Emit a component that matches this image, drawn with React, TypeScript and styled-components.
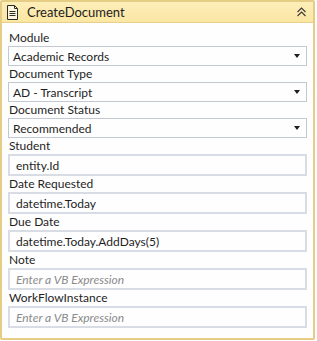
import React from "react";
import styled, { createGlobalStyle } from "styled-components";

const Global = createGlobalStyle`
  html, body { margin: 0; padding: 0; background: #ffffff; }
  body { font-family: "Lato", "Noto Sans", sans-serif; }
`;

const Panel = styled.div`
  width: 315px;
  height: 340px;
  box-sizing: border-box;
  border: 2px solid #e6cd85;
  border-radius: 2px;
  background: #fefefe;
  display: flex;
  flex-direction: column;
`;

const Header = styled.div`
  height: 21px;
  box-sizing: border-box;
  background: linear-gradient(#fdeeb9, #fbe6a3);
  border-bottom: 1px solid #e8d08c;
  display: flex;
  align-items: center;
  padding: 0 6px 0 4px;
  gap: 8px;
`;

const Title = styled.span`
  flex: 1;
  font-size: 13px;
  color: #1e1e1e;
`;

const Body = styled.div`
  display: flex;
  flex-direction: column;
  padding: 7px 6px 0 6px;
`;

const Field = styled.div`
  display: flex;
  flex-direction: column;
`;

const Label = styled.div`
  font-size: 12px;
  line-height: 16px;
  color: #1e1e1e;
  padding-left: 1px;
`;

const Select = styled.div`
  height: 20px;
  box-sizing: border-box;
  border: 1px solid #c3c9d2;
  background: #fefefe;
  display: flex;
  align-items: center;
  padding: 0 6px 0 4px;
  font-size: 12px;
  color: #1e1e1e;
  justify-content: space-between;
`;

const Arrow = styled.span`
  width: 0;
  height: 0;
  border-left: 3.5px solid transparent;
  border-right: 3.5px solid transparent;
  border-top: 4px solid #1e1e1e;
`;

const TextBox = styled.div<{ $placeholder?: boolean }>`
  height: 22px;
  box-sizing: border-box;
  border: 2px solid #d8dde5;
  background: #fefefe;
  display: flex;
  align-items: center;
  padding: 0 6px;
  font-size: 12px;
  color: ${(p) => (p.$placeholder ? "#8a8a8a" : "#1e1e1e")};
  font-style: ${(p) => (p.$placeholder ? "italic" : "normal")};
`;

const DocIcon = () => (
  <svg width="13" height="15" viewBox="0 0 13 15">
    <path d="M1.5 0.5 H8.5 L11.5 3.5 V14.5 H1.5 Z" fill="#fdf6dc" stroke="#2a2a2a" strokeWidth="1" />
    <path d="M8.5 0.5 V3.5 H11.5" fill="none" stroke="#2a2a2a" strokeWidth="1" />
    <path d="M3.5 6.5 H9.5 M3.5 8.5 H9.5 M3.5 10.5 H9.5" stroke="#2a2a2a" strokeWidth="1" />
  </svg>
);

const Collapse = () => (
  <svg width="11" height="10" viewBox="0 0 11 10">
    <path d="M1.5 5 L5.5 1 L9.5 5 M1.5 9 L5.5 5 L9.5 9" fill="none" stroke="#3a3a3a" strokeWidth="1.1" />
  </svg>
);

const selects = [
  { label: "Module", value: "Academic Records" },
  { label: "Document Type", value: "AD - Transcript" },
  { label: "Document Status", value: "Recommended" },
];

const texts = [
  { label: "Student", value: "entity.Id" },
  { label: "Date Requested", value: "datetime.Today" },
  { label: "Due Date", value: "datetime.Today.AddDays(5)" },
  { label: "Note", value: "" },
  { label: "WorkFlowInstance", value: "" },
];

export default function App() {
  return (
    <>
      <Global />
      <Panel>
        <Header>
          <DocIcon />
          <Title>CreateDocument</Title>
          <Collapse />
        </Header>
        <Body>
          {selects.map((s) => (
            <Field key={s.label}>
              <Label>{s.label}</Label>
              <Select>
                {s.value}
                <Arrow />
              </Select>
            </Field>
          ))}
          {texts.map((t) => (
            <Field key={t.label}>
              <Label>{t.label}</Label>
              <TextBox $placeholder={!t.value}>{t.value || "Enter a VB Expression"}</TextBox>
            </Field>
          ))}
        </Body>
      </Panel>
    </>
  );
}
